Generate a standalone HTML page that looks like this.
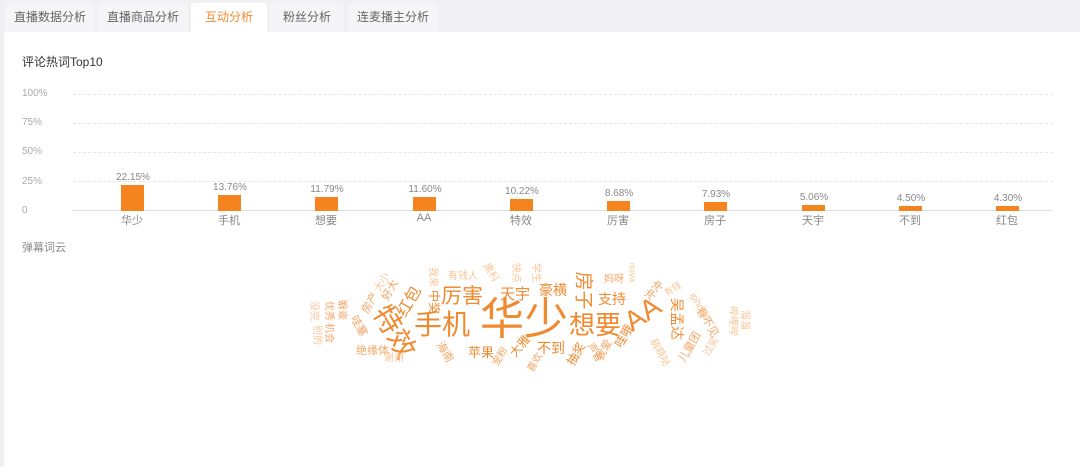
<!DOCTYPE html>
<html><head><meta charset="utf-8"><style>
*{margin:0;padding:0;box-sizing:border-box}
body{width:1080px;height:467px;background:#f0f0f3;font-family:"Liberation Sans","Noto Sans CJK SC",sans-serif;position:relative;overflow:hidden}
.tab{position:absolute;top:3px;height:29px;background:#f5f5f7;color:#666;font-size:12px;line-height:29px;text-align:center;border-radius:3px 3px 0 0}
.tab.a{background:#fff;color:#f08a30}
.panel{position:absolute;left:4px;top:32px;right:0;bottom:0;background:#fff;border-radius:3px 0 0 0}
.a1{position:absolute}
.ax{position:absolute;left:22px;font-size:10px;color:#aaa}
.gl{position:absolute;left:73px;width:980px;border-top:1px dashed #e6e6e6}
.bar{position:absolute;width:23px;background:#f5841f}
.v{position:absolute;font-size:10px;color:#888;width:60px;text-align:center}
.lb{position:absolute;font-size:11px;color:#888;width:60px;text-align:center;top:212px}
.w{position:absolute;white-space:nowrap;line-height:1;color:#f08a30}
.l{color:#f4a666}.ll{color:#f8c596}
</style></head><body>
<div class="tab" style="left:5px;width:90px">直播数据分析</div>
<div class="tab" style="left:98px;width:90px">直播商品分析</div>
<div class="tab a" style="left:191px;width:76px">互动分析</div>
<div class="tab" style="left:270px;width:74px">粉丝分析</div>
<div class="tab" style="left:348px;width:90px">连麦播主分析</div>
<div class="panel"></div>
<div class="a1" style="left:22px;top:53px;font-size:12px;color:#333">评论热词Top10</div>
<div class="ax" style="top:88px">100%</div><div class="gl" style="top:94px"></div>
<div class="ax" style="top:117px">75%</div><div class="gl" style="top:123px"></div>
<div class="ax" style="top:146px">50%</div><div class="gl" style="top:152px"></div>
<div class="ax" style="top:176px">25%</div><div class="gl" style="top:181px"></div>
<div class="ax" style="top:205px">0</div>
<div class="a1" style="left:73px;top:210px;width:980px;border-top:1px solid #ddd"></div>
<div class="bar" style="left:121px;top:185px;height:26px"></div><div class="v" style="left:103px;top:172px">22.15%</div><div class="lb" style="left:102px">华少</div>
<div class="bar" style="left:218px;top:195px;height:16px"></div><div class="v" style="left:200px;top:182px">13.76%</div><div class="lb" style="left:199px">手机</div>
<div class="bar" style="left:315px;top:197px;height:14px"></div><div class="v" style="left:297px;top:184px">11.79%</div><div class="lb" style="left:296px">想要</div>
<div class="bar" style="left:413px;top:197px;height:14px"></div><div class="v" style="left:395px;top:184px">11.60%</div><div class="lb" style="left:394px">AA</div>
<div class="bar" style="left:510px;top:199px;height:12px"></div><div class="v" style="left:492px;top:186px">10.22%</div><div class="lb" style="left:491px">特效</div>
<div class="bar" style="left:607px;top:201px;height:10px"></div><div class="v" style="left:589px;top:188px">8.68%</div><div class="lb" style="left:588px">厉害</div>
<div class="bar" style="left:704px;top:202px;height:9px"></div><div class="v" style="left:686px;top:189px">7.93%</div><div class="lb" style="left:685px">房子</div>
<div class="bar" style="left:802px;top:205px;height:6px"></div><div class="v" style="left:784px;top:192px">5.06%</div><div class="lb" style="left:783px">天宇</div>
<div class="bar" style="left:899px;top:206px;height:5px"></div><div class="v" style="left:881px;top:193px">4.50%</div><div class="lb" style="left:880px">不到</div>
<div class="bar" style="left:996px;top:206px;height:5px"></div><div class="v" style="left:978px;top:193px">4.30%</div><div class="lb" style="left:977px">红包</div>
<div class="a1" style="left:22px;top:239px;font-size:11px;color:#888">弹幕词云</div>

<div class="w" style="left:480px;top:298px;font-size:44px">华少</div>
<div class="w" style="left:414px;top:311px;font-size:28px">手机</div>
<div class="w" style="left:569px;top:312px;font-size:26px">想要</div>
<div class="w" style="left:624px;top:300px;font-size:28px;transform:rotate(-35deg)">AA</div>
<div class="w" style="left:366px;top:318px;font-size:28px;transform:rotate(60deg)">特效</div>
<div class="w" style="left:441px;top:286px;font-size:21px">厉害</div>
<div class="w" style="left:500px;top:287px;font-size:15px">天宇</div>
<div class="w" style="left:539px;top:283px;font-size:14px">豪横</div>
<div class="w" style="left:564px;top:281px;font-size:19px;transform:rotate(90deg)">房子</div>
<div class="w" style="left:598px;top:292px;font-size:14px">支持</div>
<div class="w" style="left:394px;top:294px;font-size:16px;transform:rotate(-60deg)">红包</div>
<div class="w" style="left:537px;top:341px;font-size:14px">不到</div>
<div class="w" style="left:468px;top:346px;font-size:13px">苹果</div>
<div class="w" style="left:656px;top:312px;font-size:14px;transform:rotate(90deg)">吴孟达</div>
<div class="w" style="left:422px;top:296px;font-size:12px;transform:rotate(90deg)">中奖</div>
<div class="w" style="left:508px;top:340px;font-size:12px;transform:rotate(-50deg)">大雅</div>
<div class="w" style="left:564px;top:348px;font-size:12px;transform:rotate(-60deg)">抽奖</div>
<div class="w" style="left:612px;top:330px;font-size:12px;transform:rotate(-60deg)">哇哦</div>
<div class="w l" style="left:594px;top:345px;font-size:11px;transform:rotate(-60deg)">我爱</div>
<div class="w l" style="left:674px;top:342px;font-size:11px;transform:rotate(-60deg)">儿童团</div>
<div class="w l" style="left:690px;top:317px;font-size:11px;transform:rotate(60deg)">看不见</div>
<div class="w l" style="left:644px;top:286px;font-size:11px;transform:rotate(-50deg)">冲冲</div>
<div class="w l" style="left:356px;top:346px;font-size:11px">绝缘体</div>
<div class="w l" style="left:347px;top:321px;font-size:11px;transform:rotate(60deg)">哇塞</div>
<div class="w l" style="left:360px;top:298px;font-size:11px;transform:rotate(-60deg)">房产</div>
<div class="w l" style="left:380px;top:285px;font-size:11px;transform:rotate(-60deg)">好大</div>
<div class="w l" style="left:335px;top:305px;font-size:10px;transform:rotate(-90deg)">豪横</div>
<div class="w l" style="left:318px;top:328px;font-size:10px;transform:rotate(90deg)">机会</div>
<div class="w l" style="left:318px;top:306px;font-size:10px;transform:rotate(90deg)">优秀</div>
<div class="w l" style="left:433px;top:347px;font-size:11px;transform:rotate(60deg)">海南</div>
<div class="w l" style="left:491px;top:352px;font-size:10px;transform:rotate(-60deg)">宠粉</div>
<div class="w l" style="left:526px;top:358px;font-size:10px;transform:rotate(-60deg)">喜欢</div>
<div class="w l" style="left:598px;top:300px;font-size:10px"> </div>
<div class="w l" style="left:604px;top:275px;font-size:10px">妈呀</div>
<div class="w l" style="left:584px;top:348px;font-size:10px;transform:rotate(60deg)">声音</div>
<div class="w ll" style="left:448px;top:272px;font-size:10px">有钱人</div>
<div class="w ll" style="left:422px;top:272px;font-size:10px;transform:rotate(90deg)">我来</div>
<div class="w ll" style="left:480px;top:268px;font-size:10px;transform:rotate(60deg)">黑科</div>
<div class="w ll" style="left:505px;top:268px;font-size:10px;transform:rotate(90deg)">快点</div>
<div class="w ll" style="left:525px;top:268px;font-size:10px;transform:rotate(90deg)">学生</div>
<div class="w ll" style="left:622px;top:268px;font-size:9px;transform:rotate(90deg)">nova</div>
<div class="w ll" style="left:664px;top:285px;font-size:9px;transform:rotate(-30deg)">有钱</div>
<div class="w ll" style="left:684px;top:302px;font-size:10px;transform:rotate(60deg)">iphone</div>
<div class="w ll" style="left:717px;top:316px;font-size:10px;transform:rotate(90deg)">哔哩哔</div>
<div class="w ll" style="left:734px;top:315px;font-size:10px;transform:rotate(90deg)">溜溜</div>
<div class="w ll" style="left:702px;top:342px;font-size:10px;transform:rotate(-60deg)">过奖</div>
<div class="w ll" style="left:644px;top:348px;font-size:10px;transform:rotate(60deg)">萌萌哒</div>
<div class="w ll" style="left:303px;top:306px;font-size:10px;transform:rotate(90deg)">没完</div>
<div class="w ll" style="left:306px;top:330px;font-size:10px;transform:rotate(90deg)">别的</div>
<div class="w ll" style="left:373px;top:278px;font-size:10px;transform:rotate(-60deg)">大小</div>
<div class="w ll" style="left:384px;top:354px;font-size:10px">谢谢</div>
</body></html>
